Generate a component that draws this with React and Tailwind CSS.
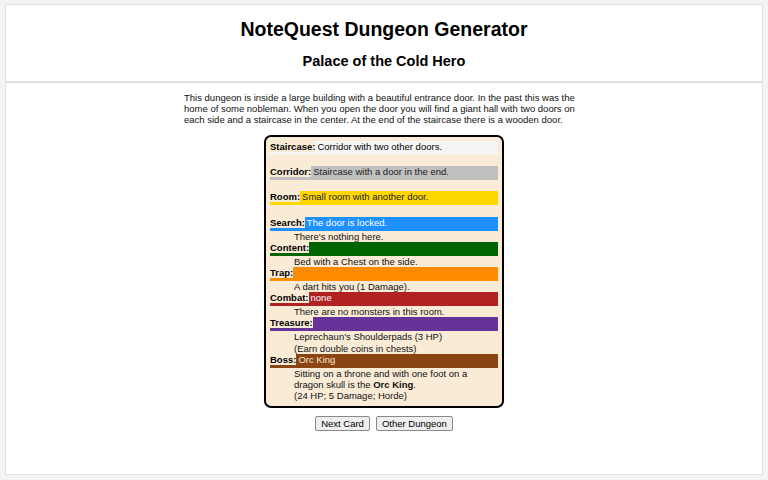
import React from 'react';

const rooms = [
  { label: 'Staircase:', text: 'Corridor with two other doors.', bg: 'bg-[#f5f5f5]', fg: 'text-black', details: [] },
  { label: 'Corridor:', text: 'Staircase with a door in the end.', bg: 'bg-[#c0c0c0]', fg: 'text-[#222]', details: [] },
  { label: 'Room:', text: 'Small room with another door.', bg: 'bg-[#ffd700]', fg: 'text-[#222]', details: [] },
  { label: 'Search:', text: 'The door is locked.', bg: 'bg-[#1e90ff]', fg: 'text-white', details: ["There's nothing here."] },
  { label: 'Content:', text: '', bg: 'bg-[#006400]', fg: 'text-white', details: ['Bed with a Chest on the side.'] },
  { label: 'Trap:', text: '', bg: 'bg-[#ff8c00]', fg: 'text-white', details: ['A dart hits you (1 Damage).'] },
  { label: 'Combat:', text: 'none', bg: 'bg-[#b22222]', fg: 'text-white', details: ['There are no monsters in this room.'] },
  {
    label: 'Treasure:',
    text: '',
    bg: 'bg-[#663399]',
    fg: 'text-white',
    details: ["Leprechaun's Shoulderpads (3 HP)", '(Earn double coins in chests)'],
  },
  {
    label: 'Boss:',
    text: 'Orc King',
    bg: 'bg-[#8b4513]',
    fg: 'text-[#f5e6d6]',
    details: [
      'Sitting on a throne and with one foot on a',
      <>dragon skull is the <b>Orc King</b>.</>,
      '(24 HP; 5 Damage; Horde)',
    ],
  },
];

function CardRow({ room }) {
  return (
    <div>
      <div className={`flex items-start h-[14px] ${room.bg}`}>
        <b className="h-[11px] bg-[#faebd7] leading-[12px] text-black">{room.label}</b>
        <span className={`leading-[12px] pl-[2px] ${room.fg}`}>{room.text}</span>
      </div>
      <div className="pl-[24px] min-h-[11.2px] leading-[11.2px]">
        {room.details.map((d, i) => (
          <div key={i}>{d}</div>
        ))}
      </div>
    </div>
  );
}

export default function App() {
  return (
    <div className="w-[768px] h-[480px] bg-[#f3f3f3] p-[4px_5px_5px_5px] font-['Liberation_Sans',Arial,sans-serif] text-[#111]">
      <div className="h-full bg-white border border-[#e2e2e2] flex flex-col">
        <div className="h-[78px] flex flex-col items-center border-b-2 border-[#dedede]">
          <h1 className="mt-[13px] text-[19.5px] font-bold leading-[22px] text-black">NoteQuest Dungeon Generator</h1>
          <h2 className="mt-[13px] text-[14.5px] font-bold leading-[16px] text-black">Palace of the Cold Hero</h2>
        </div>
        <div className="flex flex-col items-center">
          <p className="mt-[9px] w-[400px] text-[9.5px] leading-[11px]">
            This dungeon is inside a large building with a beautiful entrance door. In the past this was the home of
            some nobleman. When you open the door you will find a giant hall with two doors on each side and a staircase
            in the center. At the end of the staircase there is a wooden door.
          </p>
          <div className="mt-[10px] w-[240px] rounded-[7px] border-2 border-black bg-[#faebd7] px-[4px] pt-[4px] pb-[5px] text-[9.5px] text-[#111]">
            {rooms.map((r) => (
              <CardRow key={r.label} room={r} />
            ))}
          </div>
          <div className="mt-[8px] flex gap-[6px] text-[9.5px]">
            <button className="h-[15px] px-[5px] leading-[13px] bg-[#efefef] border border-[#8a8a8a] rounded-[2px] text-black">
              Next Card
            </button>
            <button className="h-[15px] px-[5px] leading-[13px] bg-[#efefef] border border-[#8a8a8a] rounded-[2px] text-black">
              Other Dungeon
            </button>
          </div>
        </div>
      </div>
    </div>
  );
}
